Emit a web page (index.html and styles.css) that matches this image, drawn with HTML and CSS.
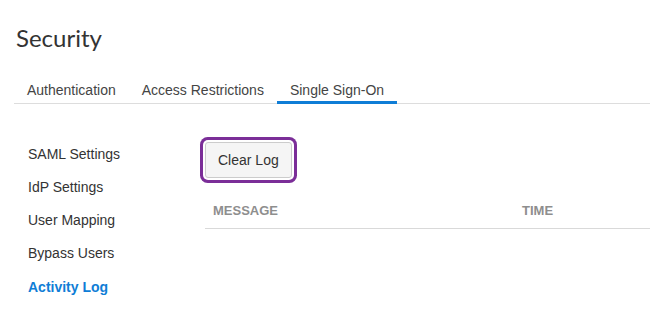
FILE: index.html
```html
<!DOCTYPE html>
<html lang="en">
<head>
<meta charset="utf-8">
<title>Security</title>
<link rel="stylesheet" href="styles.css">
</head>
<body>
<div class="page">
  <h1 class="title">Security</h1>
  <nav class="tabs">
    <a class="tab">Authentication</a>
    <a class="tab">Access Restrictions</a>
    <a class="tab tab-active">Single Sign-On</a>
  </nav>
  <div class="layout">
    <ul class="side-nav">
      <li class="side-item">SAML Settings</li>
      <li class="side-item">IdP Settings</li>
      <li class="side-item">User Mapping</li>
      <li class="side-item">Bypass Users</li>
      <li class="side-item side-item-active">Activity Log</li>
    </ul>
    <main class="content">
      <button class="btn btn-focused" type="button">Clear Log</button>
      <table class="log">
        <colgroup>
          <col class="col-message">
          <col class="col-time">
        </colgroup>
        <thead>
          <tr>
            <th class="log-th">MESSAGE</th>
            <th class="log-th">TIME</th>
          </tr>
        </thead>
        <tbody></tbody>
      </table>
    </main>
  </div>
</div>
</body>
</html>
```

FILE: styles.css
```css
* {
  box-sizing: border-box;
}

html, body {
  margin: 0;
  padding: 0;
  background: #ffffff;
}

body {
  font-family: "Liberation Sans", Arial, Helvetica, sans-serif;
  font-size: 14px;
  color: #333333;
}

.page {
  padding: 0 0 0 14px;
}

.title {
  margin: 24px 0 30px 2px;
  font-family: Lato, "Liberation Sans", sans-serif;
  font-weight: 400;
  font-size: 24px;
  line-height: 28px;
  color: #333333;
}

.tabs {
  display: flex;
  border-bottom: 1px solid #dddddd;
}

.tab {
  display: block;
  padding: 0 13px 2px;
  margin-bottom: -1px;
  line-height: 17px;
  color: #444444;
  border-bottom: 3px solid transparent;
  text-decoration: none;
}

.tab-active {
  border-bottom-color: #0f7dd6;
}

.layout {
  display: flex;
  margin-top: 34px;
}

.side-nav {
  list-style: none;
  margin: 0;
  padding: 0 0 0 14px;
  width: 191px;
  flex: none;
}

.side-item {
  line-height: 33.15px;
  color: #333333;
}

.side-item-active {
  font-weight: 700;
  color: #0f7dd6;
}

.content {
  flex: 1;
  min-width: 0;
}

.btn {
  display: block;
  margin-top: 4px;
  height: 36px;
  padding: 0 12px;
  font-family: "Liberation Sans", Arial, sans-serif;
  font-size: 14px;
  line-height: 34px;
  color: #333333;
  background: #f5f5f5;
  border: 1px solid #cccccc;
  border-radius: 3px;
}

.btn-focused {
  box-shadow: 0 0 0 2px #ffffff, 0 0 0 5px #7b2e98;
}

.log {
  width: 100%;
  margin-top: 16px;
  border-collapse: collapse;
}

.col-message {
  width: 309px;
}

.log-th {
  padding: 8px;
  text-align: left;
  font-size: 13px;
  font-weight: 700;
  line-height: 18px;
  color: #8e8e8e;
  border-bottom: 1px solid #d9d9d9;
}
```
